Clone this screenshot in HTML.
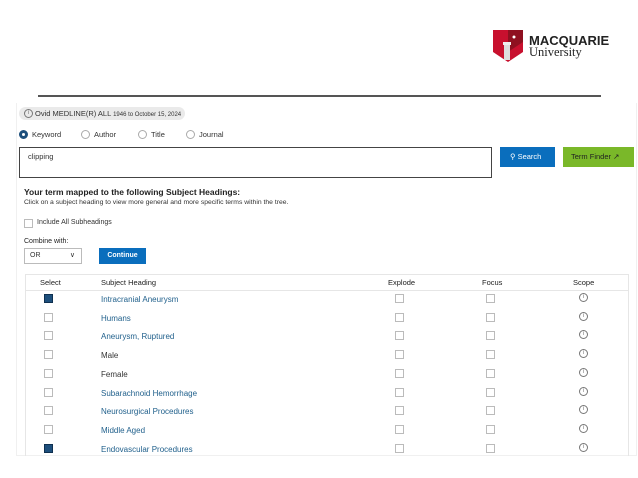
<!DOCTYPE html>
<html><head><style>
*{margin:0;padding:0;box-sizing:border-box}
body{width:638px;height:478px;background:#fff;font-family:"Liberation Sans",sans-serif;color:#333;position:relative;overflow:hidden;font-size:8px}
.a{position:absolute}
.cb{position:absolute;width:9px;height:9px;border:1px solid #bbb;background:#fff}
.ck{position:absolute;width:9px;height:9px;background:#1d4f7c;border:1px solid #0f3050}
.lk{color:#1f5f8b}
.info{position:absolute;width:9px;height:9px;border:1px solid #777;border-radius:50%;font-size:6px;line-height:7px;text-align:center;color:#777}
.rad{position:absolute;width:9px;height:9px;border:1px solid #aaa;border-radius:50%}
</style></head><body>
<svg class="a" style="left:493px;top:30px" width="30" height="32" viewBox="0 0 30 32">
<path d="M0 0H30V22L15 32L0 22Z" fill="#c8102e"/>
<path d="M15 0H30V12L15 22Z" fill="#8f1020"/>
<rect x="11" y="14" width="6" height="16" fill="#ddd"/>
<rect x="10" y="12" width="8" height="3" fill="#eee"/>
<circle cx="21" cy="7" r="1.5" fill="#fff"/>
</svg>
<div class="a" style="left:529px;top:33px;font-size:13px;font-weight:bold;color:#222">MACQUARIE</div>
<div class="a" style="left:529px;top:45px;font-family:'Liberation Serif',serif;font-size:12.5px;color:#222">University</div>
<div class="a" style="left:38px;top:95px;width:563px;height:2px;background:#555"></div>
<div class="a" style="left:16px;top:103px;width:621px;height:353px;border:1px solid #f0f0f0;border-top:none"></div>
<div class="a" style="left:19px;top:107px;width:166px;height:13px;background:#eaeaea;border-radius:7px"></div>
<div class="info" style="left:24px;top:109px">i</div>
<div class="a" style="left:35px;top:109px;font-size:7.5px;color:#333">Ovid MEDLINE(R) ALL <span style="font-size:6px">1946 to October 15, 2024</span></div>
<div class="rad" style="left:19px;top:130px;border:3px solid #1d4f7c"></div>
<div class="a" style="left:32px;top:130px;font-size:7.5px">Keyword</div>
<div class="rad" style="left:81px;top:130px"></div>
<div class="a" style="left:94px;top:130px;font-size:7.5px">Author</div>
<div class="rad" style="left:138px;top:130px"></div>
<div class="a" style="left:151px;top:130px;font-size:7.5px">Title</div>
<div class="rad" style="left:186px;top:130px"></div>
<div class="a" style="left:199px;top:130px;font-size:7.5px">Journal</div>
<div class="a" style="left:19px;top:147px;width:473px;height:31px;border:1.5px solid #444"></div>
<div class="a" style="left:28px;top:152px;font-size:7.5px">clipping</div>
<div class="a" style="left:500px;top:147px;width:55px;height:20px;background:#0a6ebd;color:#fff;font-size:7.5px;line-height:20px;padding-left:10px">&#9906; Search</div>
<div class="a" style="left:563px;top:147px;width:71px;height:20px;background:#7ab829;color:#222;font-size:7.5px;line-height:20px;padding-left:8px">Term Finder &#8599;</div>
<div class="a" style="left:24px;top:187px;font-size:8.5px;font-weight:bold;color:#222">Your term mapped to the following Subject Headings:</div>
<div class="a" style="left:24px;top:199px;font-size:6.8px;color:#333">Click on a subject heading to view more general and more specific terms within the tree.</div>
<div class="cb" style="left:24px;top:219px"></div>
<div class="a" style="left:37px;top:219px;font-size:7px">Include All Subheadings</div>
<div class="a" style="left:24px;top:238px;font-size:7px;color:#222">Combine with:</div>
<div class="a" style="left:24px;top:248px;width:58px;height:16px;border:1px solid #bbb;font-size:7px;line-height:14px;padding-left:5px">OR<span style="position:absolute;right:6px;top:0">&#8744;</span></div>
<div class="a" style="left:99px;top:248px;width:47px;height:16px;background:#0a6ebd;color:#fff;font-size:7px;line-height:16px;text-align:center;font-weight:bold">Continue</div>
<div class="a" style="left:25px;top:274px;width:604px;height:190px;border:1px solid #e6e6e6"></div>
<div class="a" style="left:25px;top:290px;width:604px;height:1px;background:#e6e6e6"></div>
<div class="a" style="left:40px;top:278px;font-size:7.5px;color:#222">Select</div>
<div class="a" style="left:101px;top:278px;font-size:7.5px;color:#222">Subject Heading</div>
<div class="a" style="left:388px;top:278px;font-size:7.5px;color:#222">Explode</div>
<div class="a" style="left:482px;top:278px;font-size:7.5px;color:#222">Focus</div>
<div class="a" style="left:573px;top:278px;font-size:7.5px;color:#222">Scope</div>
<div id="rows"></div>
<script>
var n=["Intracranial Aneurysm","Humans","Aneurysm, Ruptured","Male","Female","Subarachnoid Hemorrhage","Neurosurgical Procedures","Middle Aged","Endovascular Procedures"];
var lk=[1,1,1,0,0,1,1,1,1],ck=[1,0,0,0,0,0,0,0,1],h="";
for(var i=0;i<9;i++){var y=294+i*18.7;
h+='<div class="'+(ck[i]?'ck':'cb')+'" style="left:44px;top:'+y+'px"></div>';
h+='<div class="a '+(lk[i]?'lk':'')+'" style="left:101px;top:'+(y+1)+'px;font-size:8px">'+n[i]+'</div>';
h+='<div class="cb" style="left:395px;top:'+y+'px"></div><div class="cb" style="left:486px;top:'+y+'px"></div>';
h+='<div class="info" style="left:579px;top:'+(y-1)+'px">i</div>';}
document.getElementById('rows').innerHTML=h;
</script>
<div class="a" style="left:0;top:456px;width:638px;height:22px;background:#fff"></div>
</body></html>
